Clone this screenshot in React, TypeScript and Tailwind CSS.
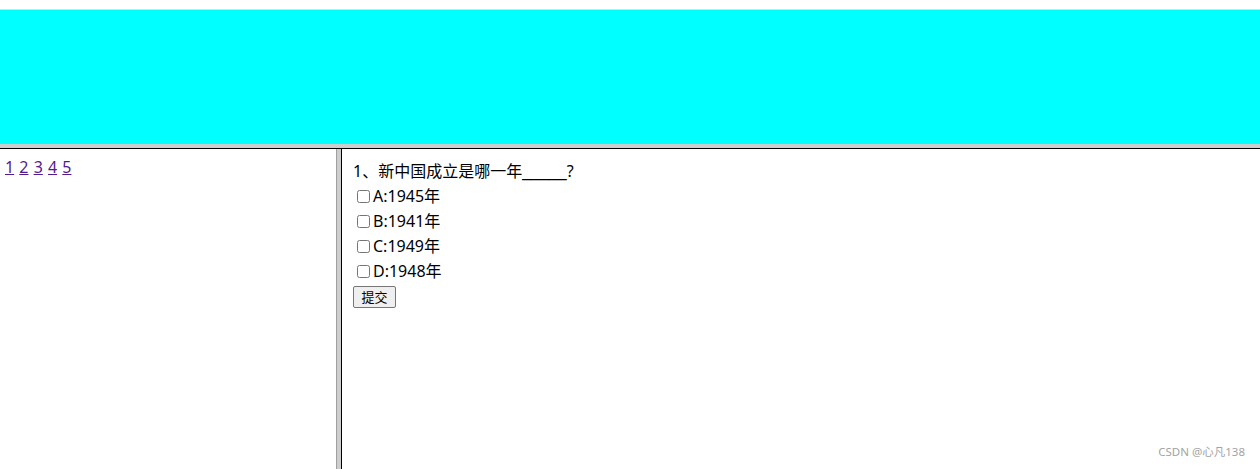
import React from "react";

const font = { fontFamily: '"Noto Sans", "Noto Sans CJK SC", sans-serif' };

export default function App() {
  const options = ["A:1945年", "B:1941年", "C:1949年", "D:1948年"];
  return (
    <div
      className="relative flex h-[469px] w-[1260px] flex-col overflow-hidden bg-white text-black"
      style={font}
    >
      <div className="h-[9px] shrink-0 bg-white" />
      <div className="h-px shrink-0 bg-[#dcdcdc]" />
      <div className="h-[134px] shrink-0 bg-[#00ffff]" />
      <div className="h-[4px] shrink-0 bg-[#cdcdcd]" />
      <div className="h-px shrink-0 bg-black" />
      <div className="flex min-h-0 flex-1">
        <div className="w-[336px] shrink-0 pl-[5px] pt-[7px] text-[16px] leading-[22px] [word-spacing:1px]">
          {[1, 2, 3, 4, 5].map((n, i) => (
            <React.Fragment key={n}>
              {i > 0 && " "}
              <a href="#" className="text-[#551a8b] underline">
                {n}
              </a>
            </React.Fragment>
          ))}
        </div>
        <div className="w-px shrink-0 bg-[#a0a0a0]" />
        <div className="w-[4px] shrink-0 bg-[#cdcdcd]" />
        <div className="w-px shrink-0 bg-black" />
        <div className="flex-1 pl-[11px] pt-[10px] text-[16px]">
          <div className="leading-[24px]">
            1、新中国成立是哪一年
            <span style={{ fontFamily: '"Liberation Sans", sans-serif' }}>_____</span>?
          </div>
          {options.map((o) => (
            <div key={o} className="flex h-[25px] items-center leading-[25px]">
              <input
                type="checkbox"
                className="ml-[4px] mr-[3px] h-[13px] w-[13px] shrink-0"
              />
              <span>{o}</span>
            </div>
          ))}
          <button
            type="button"
            className="mt-[2px] h-[22px] w-[43px] rounded-[2px] border border-[#767676] bg-[#efefef] px-[6px] text-[13px] leading-[18px]"
          >
            提交
          </button>
        </div>
      </div>
      <div className="absolute bottom-[9px] right-[15px] text-[11.5px] leading-[16px] text-[#a3a3a3]">
        CSDN @心凡138
      </div>
    </div>
  );
}
